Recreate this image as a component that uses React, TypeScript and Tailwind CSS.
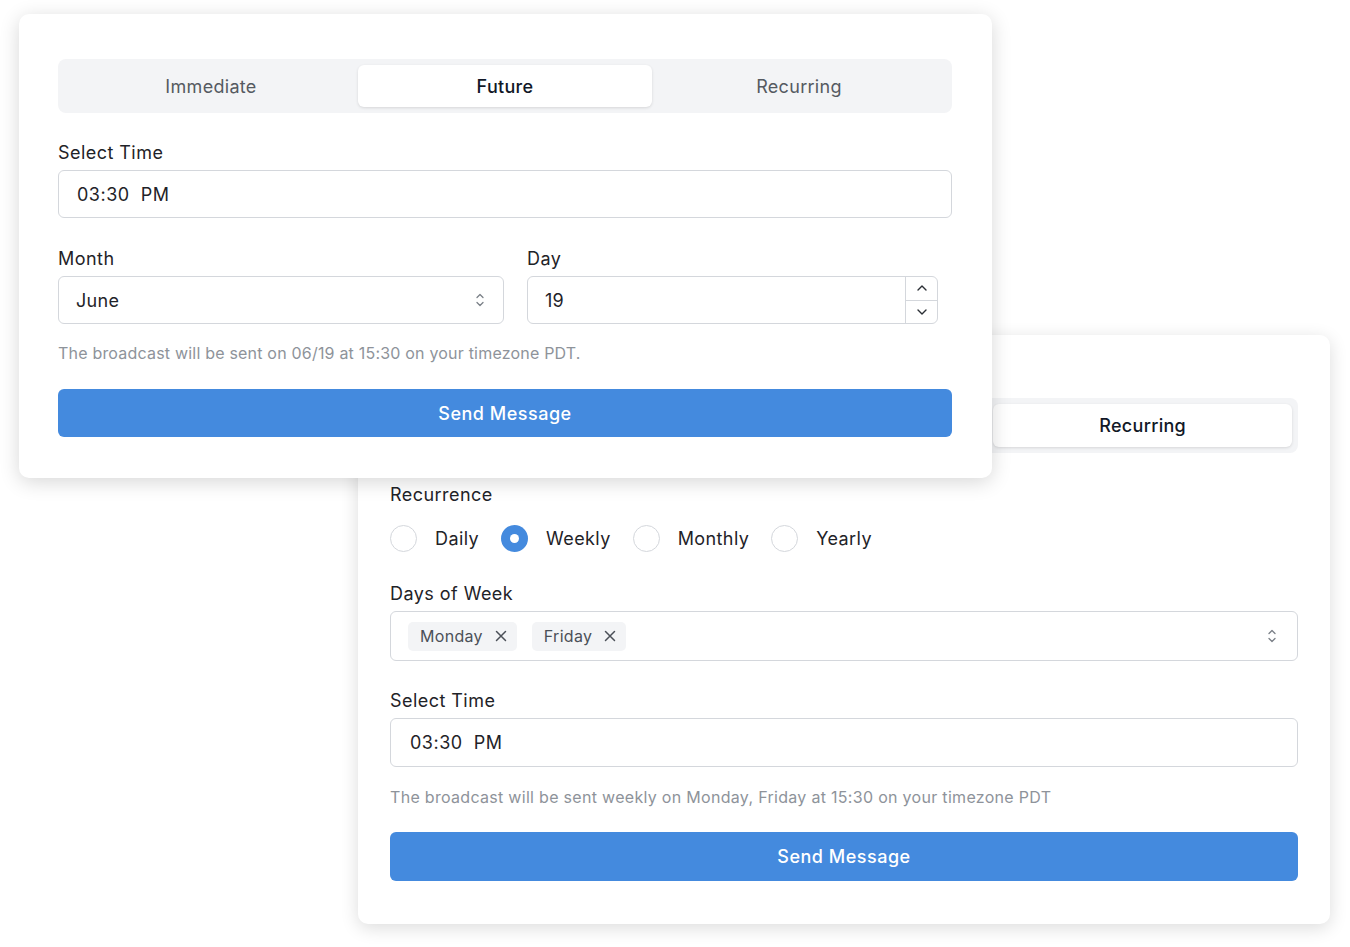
import React from "react";

function Tabs({ active }: { active: string }) {
  return (
    <div className="flex h-[54px] rounded-lg bg-[#f3f4f6] p-[6px]">
      {["Immediate", "Future", "Recurring"].map((t) => (
        <div
          key={t}
          className={
            t === active
              ? "flex flex-1 items-center justify-center rounded-md bg-white text-[18px] font-medium text-[#111827] shadow-[0_1px_3px_rgba(0,0,0,0.12)]"
              : "flex flex-1 items-center justify-center text-[18px] text-[#555a61]"
          }
        >
          {t}
        </div>
      ))}
    </div>
  );
}

function Label({ children }: { children: React.ReactNode }) {
  return <div className="mb-[5px] text-[18px] leading-6 tracking-[0.45px] text-[#1f2328]">{children}</div>;
}

function UpDown({ className = "" }: { className?: string }) {
  return (
    <svg width="10" height="16" viewBox="0 0 10 16" fill="none" stroke="#7b8088" strokeWidth="1.3" strokeLinecap="round" strokeLinejoin="round" className={className}>
      <path d="M2 5.5 L5 2.5 L8 5.5" />
      <path d="M2 10.5 L5 13.5 L8 10.5" />
    </svg>
  );
}

function XIcon() {
  return (
    <svg width="12" height="12" viewBox="0 0 12 12" fill="none" stroke="#4b5058" strokeWidth="1.5" strokeLinecap="round">
      <path d="M1.5 1.5 L10.5 10.5 M10.5 1.5 L1.5 10.5" />
    </svg>
  );
}

function Radio({ checked, label }: { checked?: boolean; label: string }) {
  return (
    <div className="flex items-center gap-[18px]">
      {checked ? (
        <div className="flex h-[27px] w-[27px] items-center justify-center rounded-full bg-[#448ade]">
          <div className="h-[9px] w-[9px] rounded-full bg-white" />
        </div>
      ) : (
        <div className="h-[27px] w-[27px] rounded-full border-[1.5px] border-[#d4d7dc] bg-white" />
      )}
      <span className="text-[18px] tracking-[0.4px] text-[#1f2328]">{label}</span>
    </div>
  );
}

function Chip({ label }: { label: string }) {
  return (
    <div className="flex h-[29px] items-center gap-[12px] rounded-[5px] bg-[#f3f4f6] pl-[12px] pr-[10px] text-[16px] tracking-[0.3px] text-[#4b5058]">
      <span>{label}</span>
      <XIcon />
    </div>
  );
}

export default function App() {
  return (
    <div className="relative h-[947px] w-[1350px] overflow-hidden bg-white font-['Inter','Noto_Sans',sans-serif] tracking-[0.3px]">
      {/* Back card: Recurring */}
      <div className="absolute left-[358px] top-[335px] z-0 flex h-[589px] w-[972px] flex-col rounded-[10px] bg-white px-[32px] pt-[63px] shadow-[0_4px_18px_rgba(0,0,0,0.14)]">
        <div className="h-[55px] rounded-lg bg-[#f3f4f6] p-[6px] flex">
          {["Immediate", "Future", "Recurring"].map((t) => (
            <div
              key={t}
              className={
                t === "Recurring"
                  ? "flex flex-1 items-center justify-center rounded-md bg-white text-[18px] font-medium text-[#111827] shadow-[0_1px_3px_rgba(0,0,0,0.12)]"
                  : "flex flex-1 items-center justify-center text-[18px] text-[#555a61]"
              }
            >
              {t}
            </div>
          ))}
        </div>
        <div className="mt-[30px] text-[18px] leading-6 tracking-[0.45px] text-[#1f2328]">Recurrence</div>
        <div className="mt-[18px] flex items-center gap-[22px]">
          <Radio label="Daily" />
          <Radio label="Weekly" checked />
          <Radio label="Monthly" />
          <Radio label="Yearly" />
        </div>
        <div className="mt-[30px]">
          <Label>Days of Week</Label>
          <div className="flex h-[50px] items-center gap-[15px] rounded-md border border-[#d4d7dc] bg-white pl-[17px] pr-[20px]">
            <Chip label="Monday" />
            <Chip label="Friday" />
            <div className="flex-1" />
            <UpDown />
          </div>
        </div>
        <div className="mt-[28px]">
          <Label>Select Time</Label>
          <div className="flex h-[49px] items-center rounded-md border border-[#d4d7dc] bg-white px-[19px] text-[18px] tracking-[0.5px] text-[#1f2328]">
            03:30&nbsp; PM
          </div>
        </div>
        <div className="mt-[18px] text-[16px] leading-6 tracking-[0.3px] text-[#8e939a]">
          The broadcast will be sent weekly on Monday, Friday at 15:30 on your timezone PDT
        </div>
        <button className="mt-[23px] flex h-[49px] items-center justify-center rounded-md bg-[#448ade] text-[18px] font-medium tracking-[0.5px] text-white">
          Send Message
        </button>
      </div>

      {/* Front card: Future */}
      <div className="absolute left-[19px] top-[14px] z-10 flex h-[464px] w-[973px] flex-col rounded-[10px] bg-white pl-[39px] pr-[40px] pt-[45px] shadow-[0_4px_20px_rgba(0,0,0,0.16)]">
        <Tabs active="Future" />
        <div className="mt-[28px]">
          <Label>Select Time</Label>
          <div className="flex h-[48px] items-center rounded-md border border-[#d4d7dc] bg-white px-[18px] text-[18px] tracking-[0.5px] text-[#1f2328]">
            03:30&nbsp; PM
          </div>
        </div>
        <div className="mt-[29px] grid grid-cols-[446px_1fr] gap-[23px]">
          <div>
            <Label>Month</Label>
            <div className="flex h-[48px] items-center justify-between rounded-md border border-[#d4d7dc] bg-white pl-[17px] pr-[18px] text-[18px] text-[#1f2328]">
              <span>June</span>
              <UpDown />
            </div>
          </div>
          <div>
            <Label>Day</Label>
            <div className="flex h-[48px] w-[411px] items-stretch rounded-md border border-[#d4d7dc] bg-white">
              <div className="flex flex-1 items-center pl-[17px] text-[18px] text-[#1f2328]">19</div>
              <div className="flex w-[32px] flex-col border-l border-[#d4d7dc]">
                <div className="flex flex-1 items-center justify-center border-b border-[#d4d7dc]">
                  <svg width="12" height="8" viewBox="0 0 12 8" fill="none" stroke="#2b2f35" strokeWidth="1.4" strokeLinecap="round" strokeLinejoin="round">
                    <path d="M2 6 L6 2 L10 6" />
                  </svg>
                </div>
                <div className="flex flex-1 items-center justify-center">
                  <svg width="12" height="8" viewBox="0 0 12 8" fill="none" stroke="#2b2f35" strokeWidth="1.4" strokeLinecap="round" strokeLinejoin="round">
                    <path d="M2 2 L6 6 L10 2" />
                  </svg>
                </div>
              </div>
            </div>
          </div>
        </div>
        <div className="mt-[17px] text-[16px] leading-6 tracking-[0.2px] text-[#8e939a]">
          The broadcast will be sent on 06/19 at 15:30 on your timezone PDT.
        </div>
        <button className="mt-[24px] flex h-[48px] items-center justify-center rounded-md bg-[#448ade] text-[18px] font-medium tracking-[0.5px] text-white">
          Send Message
        </button>
      </div>
    </div>
  );
}
